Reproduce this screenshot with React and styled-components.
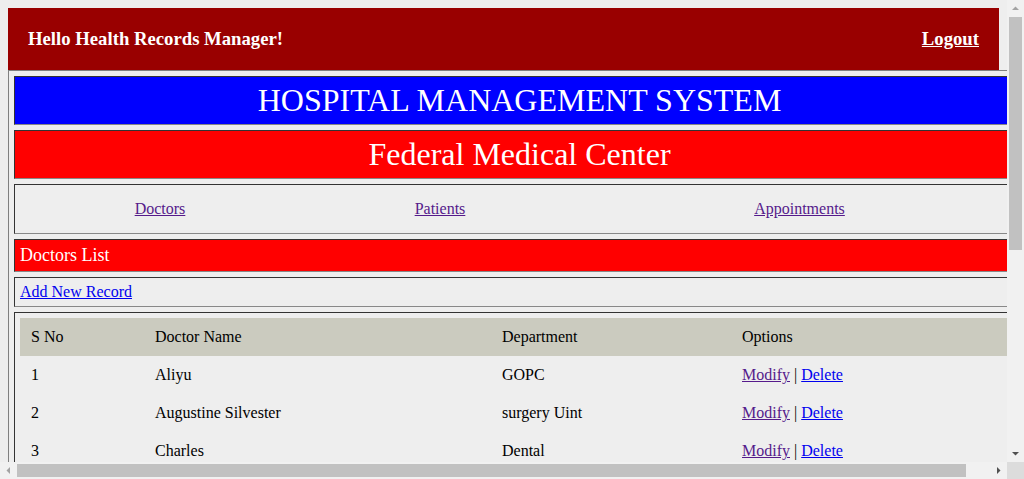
import React from 'react'
import styled, { createGlobalStyle } from 'styled-components'

const GlobalStyle = createGlobalStyle`
    html, body {
        margin: 0;
        background: #eeeeee;
        overflow: hidden;
    }
    body {
        font-family: "Liberation Serif", "Times New Roman", serif;
        font-size: 16px;
        color: #000;
    }
`

// window shell with classic scrollbars
const Shell = styled.div`
    width: 1024px;
    height: 479px;
    display: grid;
    grid-template-columns: 1007px 17px;
    grid-template-rows: 462px 17px;
`

const Viewport = styled.div`
    overflow: hidden;
    padding: 8px;
    box-sizing: border-box;
`

const VBar = styled.div`
    background: #f1f1f1;
    display: flex;
    flex-direction: column;
`

const HBar = styled.div`
    background: #f1f1f1;
    display: flex;
`

const Corner = styled.div`
    background: #dcdcdc;
`

const Arrow = styled.div`
    width: 17px;
    height: 17px;
    flex: 0 0 17px;
    display: flex;
    align-items: center;
    justify-content: center;
`

const Track = styled.div`
    flex: 1;
    display: flex;
    flex-direction: ${props => props.vertical ? 'column' : 'row'};
    padding: ${props => props.vertical ? '0 2px' : '2px 0'};
`

const Thumb = styled.div`
    background: #c1c1c1;
    flex: 0 0 ${props => props.len}px;
`

const arrowPoints = {
    up: '5,10 8.5,6.5 12,10',
    down: '5,7 12,7 8.5,10.5',
    left: '10,5 6.5,8.5 10,12',
    right: '7,5 10.5,8.5 7,12',
}

const ArrowIcon = ({ dir, color }) => (
    <svg width="17" height="17" viewBox="0 0 17 17">
        <polygon points={arrowPoints[dir]} fill={color} />
    </svg>
)

const TopBar = styled.div`
    width: 991px;
    height: 62px;
    background-color: #990000;
    display: flex;
    align-items: center;
    justify-content: space-between;
    padding: 0 20px;
    box-sizing: border-box;
    color: #fff;
    font-size: 18.72px;
    font-weight: bold;

    a{
        color: #fff;
        text-decoration: underline;
    }
`

const Frame = styled.div`
    width: 1023px;
    box-sizing: border-box;
    border: 1px solid #808080;
    padding: 5px 5px 22px;
    display: flex;
    flex-direction: column;
    gap: 5px;
`

const Panel = styled.div`
    border: 1px solid;
    border-color: #333 #888 #888 #333;
    background-color: ${props => props.bg || '#eeeeee'};
    color: ${props => props.fg || '#000'};
    height: ${props => props.h ? props.h + 'px' : 'auto'};
    box-sizing: border-box;
    display: flex;
    align-items: center;
    justify-content: ${props => props.center ? 'center' : 'flex-start'};
    font-size: ${props => props.size || 16}px;
    padding: ${props => props.pad || '0'};
    flex-shrink: 0;
`

const NavGrid = styled.div`
    width: 100%;
    display: grid;
    grid-template-columns: 290px 270px 1fr;
    align-items: center;
    justify-items: center;
`

const Link = styled.a`
    color: ${props => props.visited ? '#551a8b' : '#0000ee'};
    text-decoration: underline;
    cursor: pointer;
`

const TableBox = styled.div`
    border: 1px solid;
    border-color: #333 #888 #888 #333;
    padding: 5px;
`

const Row = styled.div`
    display: grid;
    grid-template-columns: 124px 347px 240px 1fr;
    height: 38px;
    align-items: center;
    background-color: ${props => props.head ? '#cbcbbf' : 'transparent'};

    span{
        padding-left: 11px;
        white-space: nowrap;
    }
`

const doctors = [
    { id: 1, name: 'Aliyu', dept: 'GOPC' },
    { id: 2, name: 'Augustine Silvester', dept: 'surgery Uint' },
    { id: 3, name: 'Charles', dept: 'Dental' },
]

export default function App() {
    return (
        <>
            <GlobalStyle />
            <Shell>
                <Viewport>
                    <TopBar>
                        <span>Hello Health Records Manager!</span>
                        <a>Logout</a>
                    </TopBar>
                    <Frame>
                        <Panel bg="#0000ff" fg="#fff" h={49} size={32} center>HOSPITAL MANAGEMENT SYSTEM</Panel>
                        <Panel bg="#ff0000" fg="#fff" h={49} size={32} center>Federal Medical Center</Panel>
                        <Panel h={50}>
                            <NavGrid>
                                <Link visited>Doctors</Link>
                                <Link visited>Patients</Link>
                                <Link visited>Appointments</Link>
                            </NavGrid>
                        </Panel>
                        <Panel bg="#ff0000" fg="#fff" h={33} size={18} pad="0 0 0 5px">Doctors List</Panel>
                        <Panel h={30} pad="0 0 0 5px"><Link>Add New Record</Link></Panel>
                        <TableBox>
                            <Row head>
                                <span>S No</span>
                                <span>Doctor Name</span>
                                <span>Department</span>
                                <span>Options</span>
                            </Row>
                            {doctors.map(d => (
                                <Row key={d.id}>
                                    <span>{d.id}</span>
                                    <span>{d.name}</span>
                                    <span>{d.dept}</span>
                                    <span><Link visited>Modify</Link> | <Link>Delete</Link></span>
                                </Row>
                            ))}
                        </TableBox>
                    </Frame>
                </Viewport>
                <VBar>
                    <Arrow><ArrowIcon dir="up" color="#a3a3a3" /></Arrow>
                    <Track vertical>
                        <Thumb len={233} />
                    </Track>
                    <Arrow><ArrowIcon dir="down" color="#505050" /></Arrow>
                </VBar>
                <HBar>
                    <Arrow><ArrowIcon dir="left" color="#a3a3a3" /></Arrow>
                    <Track>
                        <Thumb len={949} />
                    </Track>
                    <Arrow><ArrowIcon dir="right" color="#505050" /></Arrow>
                </HBar>
                <Corner />
            </Shell>
        </>
    )
}
